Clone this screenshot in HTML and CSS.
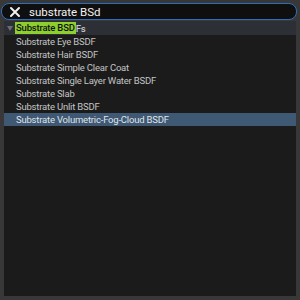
FILE: index.html
```html
<!DOCTYPE html>
<html>
<head>
<meta charset="utf-8">
<link rel="stylesheet" href="styles.css">
</head>
<body>
<div class="window">
  <div class="search">
    <svg class="close" width="12" height="12" viewBox="0 0 12 12"><path d="M2 2 L10 10 M10 2 L2 10" stroke="#f0f0f0" stroke-width="2" stroke-linecap="round"/></svg>
    <span class="query">substrate BSd</span>
  </div>
  <div class="panel">
    <div class="category">
      <svg class="arrow" width="6" height="5" viewBox="0 0 6 5"><path d="M0 0 L6 0 L3 5 Z" fill="#6a6e74"/></svg>
      <span class="hl">Substrate BSD</span><span class="rest">Fs</span>
    </div>
    <div class="list">
      <div class="item">Substrate Eye BSDF</div>
      <div class="item">Substrate Hair BSDF</div>
      <div class="item">Substrate Simple Clear Coat</div>
      <div class="item">Substrate Single Layer Water BSDF</div>
      <div class="item">Substrate Slab</div>
      <div class="item">Substrate Unlit BSDF</div>
      <div class="item selected">Substrate Volumetric-Fog-Cloud BSDF</div>
    </div>
  </div>
</div>
</body>
</html>
```
FILE: styles.css
```css
html, body {
  margin: 0;
  padding: 0;
  background: #383838;
}
.window {
  width: 300px;
  height: 300px;
  box-sizing: border-box;
  padding: 3px 4px 4px 1px;
  display: flex;
  flex-direction: column;
  font-family: Roboto, "Liberation Sans", sans-serif;
}
.search {
  height: 17px;
  box-sizing: border-box;
  border: 1px solid #2f6fb8;
  border-radius: 8px;
  background: #0f0f0f;
  display: flex;
  align-items: center;
  padding-left: 7px;
  margin-right: -1px;
}
.close {
  flex: none;
}
.query {
  color: #f2f2f2;
  font-size: 11.5px;
  margin-left: 8px;
}
.panel {
  flex: 1;
  margin-left: 3px;
  margin-top: 1px;
  display: flex;
  flex-direction: column;
  background: #1b1b1b;
}
.category {
  height: 14px;
  background: #2c2f35;
  display: flex;
  align-items: center;
  padding-left: 3px;
  font-size: 9.5px;
  font-weight: 500;
  letter-spacing: -0.2px;
}
.arrow {
  flex: none;
  margin-right: 2px;
}
.hl {
  background: #8ccf2e;
  color: #111;
  height: 12px;
  line-height: 12px;
  padding: 0 1px;
}
.rest {
  color: #c8c8c8;
}
.list {
  display: flex;
  flex-direction: column;
}
.item {
  height: 13px;
  line-height: 13px;
  font-size: 9.5px;
  letter-spacing: -0.2px;
  color: #c4c4c4;
  padding-left: 12px;
}
.item.selected {
  background: #3f5873;
  color: #dfe4ea;
}
```
